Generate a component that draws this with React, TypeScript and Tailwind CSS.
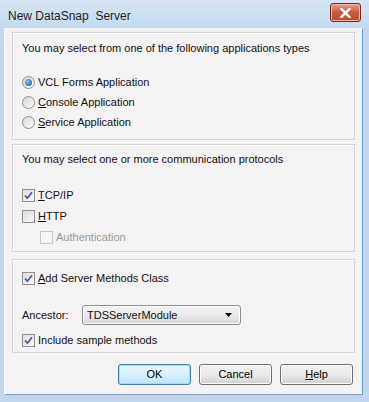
const font = "font-['Liberation_Sans','Arial',sans-serif]";

function Radio({ checked }: { checked?: boolean }) {
  return (
    <span className="relative inline-flex h-[13px] w-[13px] items-center justify-center rounded-full border border-[#8e8f8f] bg-gradient-to-br from-[#d8d8d8] to-[#fbfbfb]">
      {checked && (
        <span className="h-[7px] w-[7px] rounded-full bg-[radial-gradient(circle_at_35%_35%,#7cc3f0,#1d4f86)]" />
      )}
    </span>
  );
}

function Check({ checked, disabled }: { checked?: boolean; disabled?: boolean }) {
  return (
    <span
      className={
        "inline-flex h-[13px] w-[13px] items-center justify-center border " +
        (disabled
          ? "border-[#c6c6c6] bg-[#f6f6f6]"
          : "border-[#8e8f8f] bg-gradient-to-br from-[#dcdcdc] to-[#fafafa]")
      }
    >
      {checked && (
        <svg width="9" height="9" viewBox="0 0 9 9">
          <path d="M1 4.5 L3.4 7.2 L8 1.2" fill="none" stroke="#4a5f97" strokeWidth="1.8" />
        </svg>
      )}
    </span>
  );
}

function Button({ children, primary }: { children: React.ReactNode; primary?: boolean }) {
  return (
    <div
      className={
        "flex h-[21px] w-[73px] items-center justify-center rounded-[3px] border text-[11px] text-black " +
        (primary
          ? "border-[#3c7fb1] bg-gradient-to-b from-[#eaf6fd] via-[#d9f0fc] to-[#bee6fd] shadow-[inset_0_0_0_1px_#a6dcf7]"
          : "border-[#707070] bg-gradient-to-b from-[#f2f2f2] via-[#ebebeb] to-[#d0d0d0] shadow-[inset_0_0_0_1px_#fcfcfc]")
      }
    >
      {children}
    </div>
  );
}

function Row({ children, indent }: { children: React.ReactNode; indent?: boolean }) {
  return (
    <div className={"flex h-[21px] items-center gap-[3px] " + (indent ? "pl-[18px]" : "")}>
      {children}
    </div>
  );
}

export default function App() {
  return (
    <div className={`${font} flex h-[402px] w-[369px] flex-col bg-gradient-to-b from-[#c3d8ee] to-[#bfd6ec] text-[11px] text-[#111]`}>
      {/* title bar */}
      <div className="flex h-[28px] shrink-0 items-start justify-between bg-gradient-to-b from-[#d6e5f4] to-[#c5daef] pl-[8px] pr-[8px]">
        <span className="mt-[7px] text-[12px] text-[#1e1e1e]">New DataSnap&nbsp; Server</span>
        <div className="mt-[3px] flex h-[19px] w-[31px] items-center justify-center rounded-[3px] border border-[#6b2c26] bg-gradient-to-b from-[#e3a08e] via-[#c75a42] to-[#c44a2f] shadow-[inset_0_0_0_1px_#eab7a9]">
          <svg width="11" height="10" viewBox="0 0 11 10">
            <path d="M1.5 1 L9.5 9 M9.5 1 L1.5 9" stroke="#fff" strokeWidth="2.4" strokeLinecap="square" />
          </svg>
        </div>
      </div>

      {/* client area */}
      <div className="mb-[8px] ml-[4px] mr-[7px] flex flex-1 flex-col border-l border-[#f7fbfe] bg-[#f4f2f3] px-[7px] pt-[4px] shadow-[1px_1px_0_#6a9fc9]">
        {/* group 1 */}
        <div className="flex h-[108px] flex-col border border-[#d3d5d8] px-[9px] pt-[5px] shadow-[inset_1px_1px_0_#fff]">
          <div className="flex h-[20px] items-center">You may select from one of the following applications types</div>
          <div className="mt-[14px] flex flex-col">
            <div className="flex h-[20px] items-center gap-[3px]"><Radio checked /> VCL Forms Application</div>
            <div className="flex h-[20px] items-center gap-[3px]"><Radio /> <span><u>C</u>onsole Application</span></div>
            <div className="flex h-[20px] items-center gap-[3px]"><Radio /> <span><u>S</u>ervice Application</span></div>
          </div>
        </div>

        {/* group 2 */}
        <div className="mt-[4px] flex h-[108px] flex-col border border-[#d3d5d8] px-[9px] pt-[4px] shadow-[inset_1px_1px_0_#fff]">
          <div className="flex h-[20px] items-center">You may select one or more communication protocols</div>
          <div className="mt-[16px] flex flex-col">
            <Row><Check checked /> <span><u>T</u>CP/IP</span></Row>
            <Row><Check /> <span><u>H</u>TTP</span></Row>
            <Row indent><Check disabled /> <span className="text-[#9a9a9a]">Authentication</span></Row>
          </div>
        </div>

        {/* group 3 */}
        <div className="mt-[7px] flex h-[94px] flex-col border border-[#d3d5d8] px-[9px] pt-[8px] shadow-[inset_1px_1px_0_#fff]">
          <div className="flex h-[20px] items-center gap-[3px]"><Check checked /> <span><u>A</u>dd Server Methods Class</span></div>
          <div className="mt-[17px] flex h-[20px] items-center">
            <span className="w-[60px]">Ancestor:</span>
            <div className="flex h-[20px] w-[159px] items-center justify-between rounded-[3px] border border-[#8e8f8f] bg-gradient-to-b from-[#f2f2f2] via-[#ebebeb] to-[#d6d6d6] pl-[4px] pr-[8px] shadow-[inset_0_0_0_1px_#fcfcfc]">
              <span>TDSServerModule</span>
              <svg width="7" height="4" viewBox="0 0 7 4">
                <path d="M0 0 H7 L3.5 4 Z" fill="#000" />
              </svg>
            </div>
          </div>
          <div className="mt-[5px] flex h-[20px] items-center gap-[3px]"><Check checked /> Include sample methods</div>
        </div>

        {/* buttons */}
        <div className="mr-[2px] mt-[11px] flex justify-end gap-[8px]">
          <Button primary>OK</Button>
          <Button>Cancel</Button>
          <Button><span><u>H</u>elp</span></Button>
        </div>
      </div>
    </div>
  );
}
